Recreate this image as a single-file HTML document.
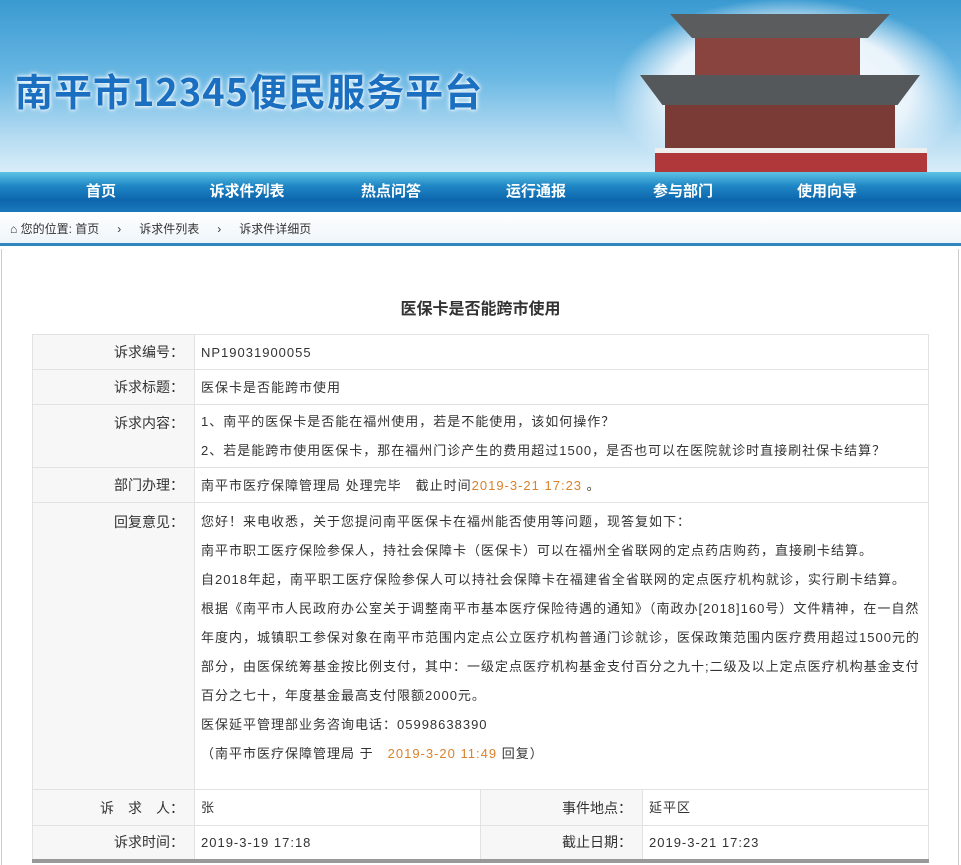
<!DOCTYPE html>
<html><head><meta charset="utf-8"><style>
*{margin:0;padding:0;box-sizing:border-box}
body{width:961px;height:865px;overflow:hidden;background:#fff;font-family:"Liberation Sans","Noto Sans CJK SC",sans-serif;font-size:13px;color:#333}
.banner{position:relative;height:172px;background:linear-gradient(180deg,#3a9ad0 0%,#6ab8e4 45%,#b6dcf2 80%,#d8edf8 100%);overflow:hidden}
.banner .t{position:absolute;left:15px;top:62px;font-size:38px;font-weight:bold;color:#1b6fc0;letter-spacing:1px;font-family:"Noto Sans CJK SC",sans-serif;text-shadow:0 0 3px #fff,0 0 6px #fff}
.tower{position:absolute;left:615px;top:0;width:346px;height:172px;background:radial-gradient(ellipse at 50% 55%,#fff 0%,#e8f3fb 50%,rgba(255,255,255,0) 72%)}
.roof1{position:absolute;left:670px;top:14px;width:220px;height:24px;background:#5a5c5e;clip-path:polygon(0 0,100% 0,90% 100%,10% 100%)}
.b1{position:absolute;left:695px;top:38px;width:165px;height:40px;background:#8a4440}
.roof2{position:absolute;left:640px;top:75px;width:280px;height:30px;background:#55585a;clip-path:polygon(0 0,100% 0,92% 100%,8% 100%)}
.b2{position:absolute;left:665px;top:105px;width:230px;height:45px;background:#7a3a36}
.base{position:absolute;left:655px;top:148px;width:272px;height:24px;background:#b0383a;border-top:5px solid #eee}
.nav{height:40px;background:linear-gradient(180deg,#5ec3e6 0%,#1f86c4 35%,#0d66ad 70%,#1a79bb 100%);position:relative}
.nav a{position:absolute;top:0;line-height:40px;color:#fff;font-size:15px;font-weight:bold;text-decoration:none;transform:translateX(-50%)}
.bc{height:34px;background:linear-gradient(180deg,#fff,#eef5fa);border-bottom:3px solid #2f85bd;line-height:34px;padding-left:10px;font-size:12px;color:#333}
.bc span{margin:0 18px}
.panel{position:absolute;top:249px;left:1px;width:958px;height:616px;border-left:1px solid #ccc;border-right:1px solid #ccc}
h1{position:absolute;top:295px;left:0;width:961px;text-align:center;font-size:16px;font-weight:bold;color:#333}
table{position:absolute;left:32px;top:334px;width:897px;border-collapse:collapse;border:1px solid #999;border-bottom:4px solid #999}
td{border:1px solid #e2e2e2;padding:0 6px;vertical-align:middle;font-size:13px}
td.l{background:#f7f7f7;text-align:right;width:162px;padding-right:10px;vertical-align:middle;font-size:14px}
td.v{line-height:29px;white-space:nowrap;letter-spacing:1px}
.o{color:#d9822b}
</style></head><body>
<div class="banner">
<div class="tower"></div><div class="roof1"></div><div class="b1"></div><div class="roof2"></div><div class="b2"></div><div class="base"></div>
<div class="t">南平市12345便民服务平台</div>
</div>
<div class="nav">
<a style="left:101px">首页</a><a style="left:247px">诉求件列表</a><a style="left:391px">热点问答</a><a style="left:536px">运行通报</a><a style="left:683px">参与部门</a><a style="left:827px">使用向导</a>
</div>
<div class="bc">⌂ 您的位置: 首页<span>›</span>诉求件列表<span>›</span>诉求件详细页</div>
<div class="panel"></div>
<h1>医保卡是否能跨市使用</h1>
<table>
<tr style="height:35px"><td class="l">诉求编号：</td><td class="v" colspan="3">NP19031900055</td></tr>
<tr style="height:35px"><td class="l">诉求标题：</td><td class="v" colspan="3">医保卡是否能跨市使用</td></tr>
<tr style="height:63px"><td class="l" style="vertical-align:top;padding-top:8px">诉求内容：</td><td class="v" colspan="3">1、南平的医保卡是否能在福州使用，若是不能使用，该如何操作？<br>2、若是能跨市使用医保卡，那在福州门诊产生的费用超过1500，是否也可以在医院就诊时直接刷社保卡结算？</td></tr>
<tr style="height:35px"><td class="l">部门办理：</td><td class="v" colspan="3">南平市医疗保障管理局 处理完毕　截止时间<span class="o">2019-3-21 17:23</span> 。</td></tr>
<tr style="height:287px"><td class="l" style="vertical-align:top;padding-top:9px">回复意见：</td><td class="v" colspan="3" style="vertical-align:top;padding-top:4px">您好！来电收悉，关于您提问南平医保卡在福州能否使用等问题，现答复如下：<br>南平市职工医疗保险参保人，持社会保障卡（医保卡）可以在福州全省联网的定点药店购药，直接刷卡结算。<br>自2018年起，南平职工医疗保险参保人可以持社会保障卡在福建省全省联网的定点医疗机构就诊，实行刷卡结算。<br>根据《南平市人民政府办公室关于调整南平市基本医疗保险待遇的通知》（南政办[2018]160号）文件精神，在一自然<br>年度内，城镇职工参保对象在南平市范围内定点公立医疗机构普通门诊就诊，医保政策范围内医疗费用超过1500元的<br>部分，由医保统筹基金按比例支付，其中：一级定点医疗机构基金支付百分之九十;二级及以上定点医疗机构基金支付<br>百分之七十，年度基金最高支付限额2000元。<br>医保延平管理部业务咨询电话：05998638390<br>（南平市医疗保障管理局 于　<span class="o">2019-3-20 11:49</span> 回复）</td></tr>
<tr style="height:36px"><td class="l">诉　求　人：</td><td class="v" style="width:286px">张</td><td class="l" style="width:160px">事件地点：</td><td class="v">延平区</td></tr>
<tr style="height:35px"><td class="l">诉求时间：</td><td class="v">2019-3-19 17:18</td><td class="l">截止日期：</td><td class="v">2019-3-21 17:23</td></tr>
</table>
</body></html>
